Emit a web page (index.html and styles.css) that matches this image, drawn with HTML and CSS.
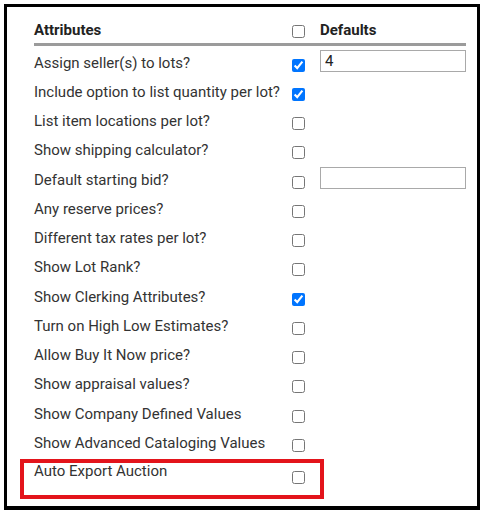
FILE: index.html
```html
<!DOCTYPE html>
<html lang="en">
<head>
<meta charset="utf-8">
<title>Attributes</title>
<link rel="stylesheet" href="styles.css">
</head>
<body>
<div class="frame">
  <div class="grid head">
    <div class="label">Attributes</div>
    <div class="cb"><input type="checkbox"></div>
    <div class="label">Defaults</div>
  </div>
  <div class="rows">
    <div class="grid row"><div class="label">Assign seller(s) to lots?</div><div class="cb"><input type="checkbox" checked></div><div class="def"><input class="text" type="text" value="4"></div></div>
    <div class="grid row"><div class="label">Include option to list quantity per lot?</div><div class="cb"><input type="checkbox" checked></div><div class="def"></div></div>
    <div class="grid row"><div class="label">List item locations per lot?</div><div class="cb"><input type="checkbox"></div><div class="def"></div></div>
    <div class="grid row"><div class="label">Show shipping calculator?</div><div class="cb"><input type="checkbox"></div><div class="def"></div></div>
    <div class="grid row"><div class="label">Default starting bid?</div><div class="cb"><input type="checkbox"></div><div class="def"><input class="text" type="text" value=""></div></div>
    <div class="grid row"><div class="label">Any reserve prices?</div><div class="cb"><input type="checkbox"></div><div class="def"></div></div>
    <div class="grid row"><div class="label">Different tax rates per lot?</div><div class="cb"><input type="checkbox"></div><div class="def"></div></div>
    <div class="grid row"><div class="label">Show Lot Rank?</div><div class="cb"><input type="checkbox"></div><div class="def"></div></div>
    <div class="grid row"><div class="label">Show Clerking Attributes?</div><div class="cb"><input type="checkbox" checked></div><div class="def"></div></div>
    <div class="grid row"><div class="label">Turn on High Low Estimates?</div><div class="cb"><input type="checkbox"></div><div class="def"></div></div>
    <div class="grid row"><div class="label">Allow Buy It Now price?</div><div class="cb"><input type="checkbox"></div><div class="def"></div></div>
    <div class="grid row"><div class="label">Show appraisal values?</div><div class="cb"><input type="checkbox"></div><div class="def"></div></div>
    <div class="grid row"><div class="label">Show Company Defined Values</div><div class="cb"><input type="checkbox"></div><div class="def"></div></div>
    <div class="grid row"><div class="label">Show Advanced Cataloging Values</div><div class="cb"><input type="checkbox"></div><div class="def"></div></div>
    <div class="highlight">
      <div class="grid row last"><div class="label">Auto Export Auction</div><div class="cb"><input type="checkbox"></div></div>
    </div>
  </div>
</div>
</body>
</html>
```
FILE: styles.css
```css
html, body {
  margin: 0;
  padding: 0;
  background: #fff;
}
body {
  font-family: Roboto, "Liberation Sans", Arial, sans-serif;
  font-size: 15px;
  line-height: 20px;
  color: #333;
}
.frame {
  box-sizing: border-box;
  width: 476px;
  height: 506px;
  margin: 4px 6px 0 4px;
  border: 3px solid #000;
  border-bottom-width: 4px;
  padding: 13px 0 0 27px;
}
.grid {
  display: grid;
  grid-template-columns: 258px 28px 146px;
  width: 432px;
}
.head {
  padding-bottom: 3px;
  border-bottom: 3px solid #9b9b9b;
  align-items: center;
}
.head .label {
  font-weight: 700;
  color: #222;
}
.head .cb input {
  margin-top: 2px;
}
.rows {
  margin-top: 2px;
}
.row {
  height: 29.25px;
  align-items: center;
}
.cb {
  display: flex;
  align-items: center;
}
.cb input {
  width: 13px;
  height: 13px;
  margin: 0;
}
.row .cb input {
  margin-top: 5px;
}
.def {
  display: flex;
}
.text {
  box-sizing: border-box;
  width: 146px;
  height: 22px;
  margin: -3px 0 0 0;
  padding: 0 4px;
  border: 1px solid #a9a9a9;
  border-radius: 0;
  font-family: Roboto, "Liberation Sans", Arial, sans-serif;
  font-size: 15px;
  color: #222;
  background: #fff;
}
.highlight {
  box-sizing: border-box;
  width: 304px;
  margin: 1px 0 0 -14px;
  padding-left: 10px;
  border: 4px solid #e3141b;
}
.row.last {
  grid-template-columns: 258px 28px;
  width: 286px;
  height: 32px;
  align-items: start;
}
.row.last .label {
  margin-top: -2px;
}
.row.last .cb input {
  margin-top: 8px;
}
```
